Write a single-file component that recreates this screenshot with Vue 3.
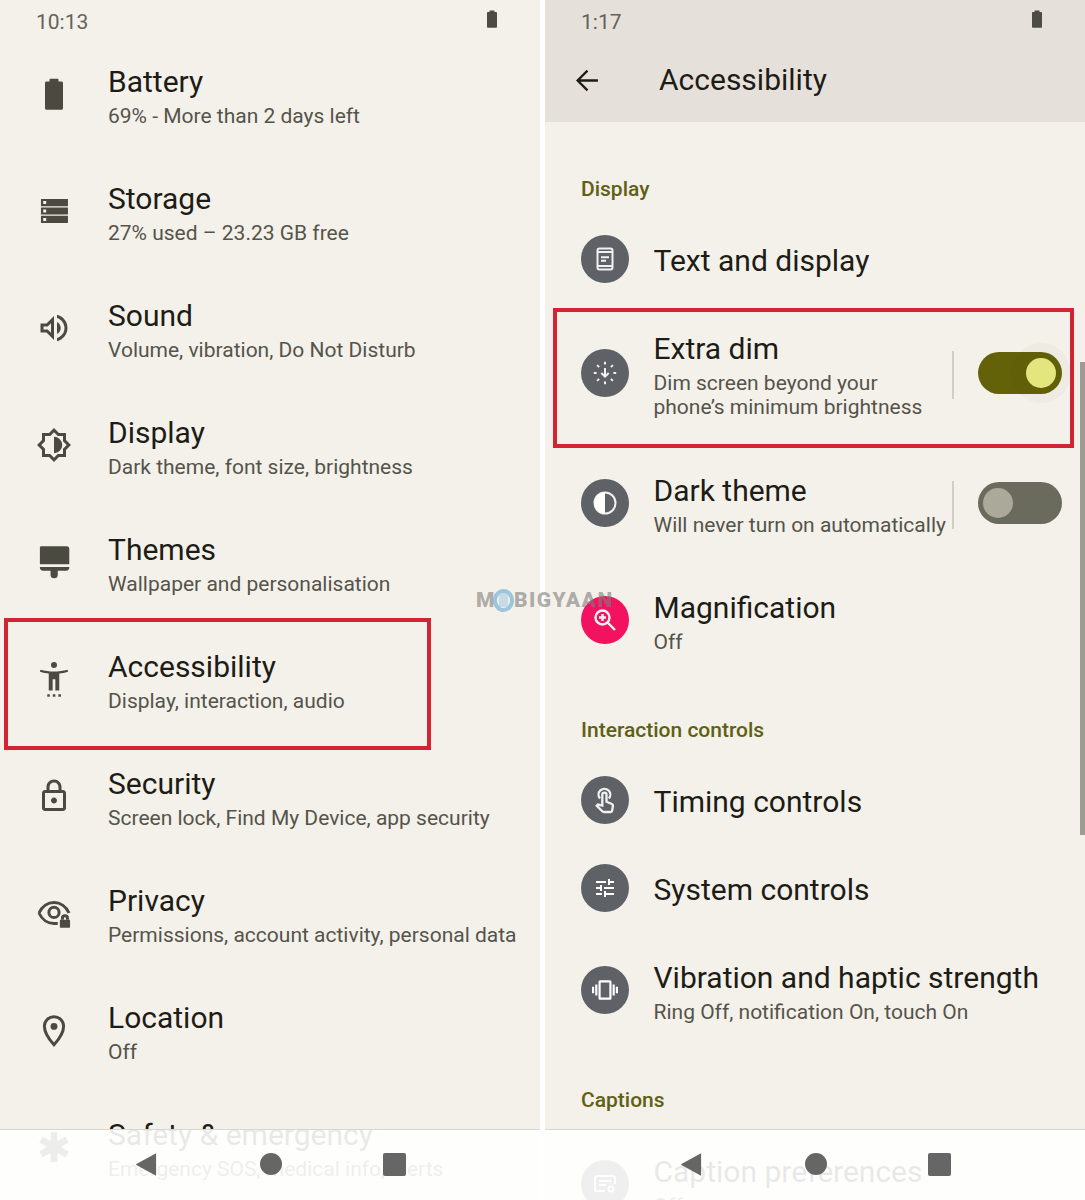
<script setup>
// icons are 24x24; f = filled path, s = stroked path
const icons = {
  battery: { f: "M9 3.600V2.400c0-.4.2-.6.6-.6h4.800c.4 0 .6.2.6.6v1.200h2c.6 0 1 .4 1 1v16.900c0 .6-.4 1-1 1H7c-.6 0-1-.4-1-1V4.600c0-.6.4-1 1-1z" },
  storage: { f: "M3.300 4h18v4.800h-18zM4.800 5.400v2h2v-2zM3.300 9.600h18v4.800h-18zM4.800 11v2h2v-2zM3.300 15.200h18V20h-18zM4.800 16.600v2h2v-2z", odd: true },
  sound: { f: "M3 9v6h4l5 5V4L7 9H3zm7-.17v6.340L7.830 13H5v-2h2.830L10 8.830zM14 7.970v8.050c1.480-.73 2.500-2.250 2.500-4.020 0-1.770-1.020-3.290-2.500-4.030zM14 3.230v2.060c2.890.86 5 3.540 5 6.710s-2.110 5.850-5 6.710v2.060c4.010-.91 7-4.490 7-8.770 0-4.280-2.990-7.860-7-8.770z" },
  display: { f: "M20 15.310L23.310 12 20 8.690V4h-4.690L12 .69 8.690 4H4v4.690L.69 12 4 15.310V20h4.690L12 23.310 15.310 20H20v-4.690zM18 14.480V18h-3.520L12 20.480 9.520 18H6v-3.520L3.520 12 6 9.520V6h3.520L12 3.520 14.480 6H18v3.520L20.480 12 18 14.480zM12 6.500v11a5.500 5.500 0 0 0 0-11z" },
  themes: { f: "M3.500 1.500h17c1 0 1.700.7 1.700 1.700v10.300H2.600V3.200c0-1 -.1-1.700.9-1.700zM2.600 15.300h19.600v.5c0 1.100-.9 2-2 2h-5.700v2.700a2.400 2.400 0 0 1-4.800 0v-2.700H4.600c-1.100 0-2-.9-2-2z" },
  access: {
    f: "M12 .6a2 2 0 1 1 0 4 2 2 0 0 1 0-4zM3 5.800c3 .8 6 1.200 9 1.200s6-.4 9-1.200l.4 1.300c-2 .7-4 1.100-5.900 1.300v11.200h-2.600v-7.500h-1.800v7.500H8.500V8.400C6.600 8.200 4.600 7.800 2.600 7.100zM7.500 22.100h1.700v1.700H7.500zM11.200 22.100h1.700v1.700h-1.700zM14.900 22.100h1.700v1.700h-1.700z"
  },
  lock: { f: "M18 8h-1V6c0-2.760-2.240-5-5-5S7 3.240 7 6v2H6c-1.100 0-2 .9-2 2v10c0 1.100.9 2 2 2h12c1.100 0 2-.9 2-2V10c0-1.100-.9-2-2-2zM9 6c0-1.660 1.340-3 3-3s3 1.340 3 3v2H9V6zm9 14H6V10h12v10zm-6-3c1.100 0 2-.9 2-2s-.9-2-2-2-2 .9-2 2 .9 2 2 2z" },
  privacy: {
    s: "M2 12C4 7.500 8 5 12 5s8 2.500 10 7M2 12c2 4.500 6 7 10 7h2.500M12 8.200a3.400 3.400 0 1 1 0 6.800 3.400 3.400 0 0 1 0-6.800zM17.600 16.500v-1a1.700 1.700 0 0 1 3.400 0v1",
    f: "M16.600 16.500h5.400c.4 0 .7.3.7.7v4c0 .4-.3.7-.7.7h-5.400c-.4 0-.7-.3-.7-.7v-4c0-.4.3-.7.7-.7z"
  },
  location: {
    s: "M12 21.800C8 17.500 5.600 13.700 5.600 9.500a6.400 6.400 0 0 1 12.800 0c0 4.200-2.400 8-6.400 12.300z",
    f: "M12 7.300a2.300 2.300 0 1 1 0 4.600 2.300 2.300 0 0 1 0-4.600z"
  },
  safety: { s: "M12 2v20M3.300 7l17.400 10M3.300 17L20.700 7", wide: true },
  phone: { s: "M6.500 1.500h11c1.100 0 2 .9 2 2v17c0 1.100-.9 2-2 2h-11c-1.100 0-2-.9-2-2v-17c0-1.100.9-2 2-2zM5 5h14M5 19h14M8 10.300h8M8 13.700h5" },
  dim: {
    s: "M12 .8v2.800M12 20.400v2.800M.8 12h2.800M20.400 12h2.800M4.100 4.100l2 2M17.900 6.100l2-2M4.100 19.900l2-2M17.900 17.900l2 2M12 7v8.500M8.300 12l3.700 3.700 3.700-3.700"
  },
  contrast: { s: "M12 1.500a10.500 10.500 0 1 1 0 21 10.500 10.500 0 0 1 0-21z", f: "M12 1.500a10.500 10.500 0 0 0 0 21z" },
  zoom: { s: "M9.500 2.500a7 7 0 1 1 0 14 7 7 0 0 1 0-14zM14.700 14.700L22 22M9.500 6v7M6 9.500h7" },
  touch: { s: "M7.700 10.700a5 5 0 1 1 7.600 0M9.700 7.500a1.800 1.800 0 0 1 3.600 0v6l4.600 1.900c.6.3 1 .9.900 1.600l-.7 4.300c-.1.6-.6 1-1.200 1h-6c-.4 0-.7-.1-1-.4l-5-5 1-1 3.800.8z" },
  tune: { f: "M3 17v2h6v-2H3zM3 5v2h10V5H3zm10 16v-2h8v-2h-8v-2h-2v6h2zM7 9v2H3v2h4v2h2V9H7zm14 4v-2H11v2h10zm-6-4h2V7h4V5h-4V3h-2v6z" },
  vibrate: { f: "M0 15h2V9H0v6zm3 2h2V7H3v10zm19-8v6h2V9h-2zm-3 8h2V7h-2v10zM16.500 3h-9C6.670 3 6 3.670 6 4.500v15c0 .83.67 1.500 1.500 1.500h9c.83 0 1.500-.67 1.500-1.500v-15c0-.83-.67-1.500-1.500-1.500zM16 19H8V5h8v14z" },
  caption: { s: "M12 19H4c-1.100 0-2-.9-2-2V6c0-1.100.9-2 2-2h16c1.100 0 2 .9 2 2v6M6 9h12M6 13h7M18 14.500a2.500 2.500 0 1 1 0 5 2.500 2.500 0 0 1 0-5z" }
};

const settings = [
  { icon: "battery", title: "Battery", sub: "69% - More than 2 days left" },
  { icon: "storage", title: "Storage", sub: "27% used – 23.23 GB free" },
  { icon: "sound", title: "Sound", sub: "Volume, vibration, Do Not Disturb" },
  { icon: "display", title: "Display", sub: "Dark theme, font size, brightness" },
  { icon: "themes", title: "Themes", sub: "Wallpaper and personalisation" },
  { icon: "access", title: "Accessibility", sub: "Display, interaction, audio" },
  { icon: "lock", title: "Security", sub: "Screen lock, Find My Device, app security" },
  { icon: "privacy", title: "Privacy", sub: "Permissions, account activity, personal data" },
  { icon: "location", title: "Location", sub: "Off" },
  { icon: "safety", title: "Safety & emergency", sub: "Emergency SOS, medical info, alerts" }
];

const sections = [
  {
    label: "Display",
    first: true,
    rows: [
      { icon: "phone", title: "Text and display", h: 88 },
      { icon: "dim", title: "Extra dim", sub: "Dim screen beyond your phone’s minimum brightness", h: 144, toggle: "on" },
      { icon: "contrast", title: "Dark theme", sub: "Will never turn on automatically", h: 116, toggle: "off" },
      { icon: "zoom", title: "Magnification", sub: "Off", h: 118, pink: true }
    ]
  },
  {
    label: "Interaction controls",
    second: true,
    rows: [
      { icon: "touch", title: "Timing controls", h: 88 },
      { icon: "tune", title: "System controls", h: 88 },
      { icon: "vibrate", title: "Vibration and haptic strength", sub: "Ring Off, notification On, touch On", h: 120 }
    ]
  },
  {
    label: "Captions",
    rows: [{ icon: "caption", title: "Caption preferences", sub: "Off", h: 120 }]
  }
];
</script>

<template>
  <div class="page">
    <section class="panel">
      <div class="status">
        <span class="time">10:13</span>
        <svg class="batt" viewBox="0 0 24 24"><path :d="icons.battery.f" /></svg>
      </div>
      <div v-for="item in settings" :key="item.title" class="setting">
        <svg class="icon" viewBox="0 0 24 24">
          <path v-if="icons[item.icon].s" class="line" :class="{ wide: icons[item.icon].wide }" :d="icons[item.icon].s" />
          <path v-if="icons[item.icon].f" :fill-rule="icons[item.icon].odd ? 'evenodd' : 'nonzero'" :d="icons[item.icon].f" />
        </svg>
        <div class="text">
          <div class="title">{{ item.title }}</div>
          <div class="sub">{{ item.sub }}</div>
        </div>
      </div>
      <div class="nav">
        <svg class="back" viewBox="0 0 22 26"><path d="M21 1.500c.3-.2.500 0 .5.300v22.400c0 .3-.2.500-.5.300L1 13.500c-.4-.2-.4-.8 0-1z" /></svg>
        <span class="home"></span>
        <span class="recent"></span>
      </div>
    </section>

    <section class="panel">
      <header class="appbar">
        <div class="status">
          <span class="time">1:17</span>
          <svg class="batt" viewBox="0 0 24 24"><path :d="icons.battery.f" /></svg>
        </div>
        <div class="toolbar">
          <svg class="arrow" viewBox="0 0 24 24"><path d="M22 12H2.500M12 2.500L2.500 12l9.500 9.500" /></svg>
          <span class="title">Accessibility</span>
        </div>
      </header>

      <template v-for="sec in sections" :key="sec.label">
        <div class="label" :class="{ first: sec.first, second: sec.second }">{{ sec.label }}</div>
        <div v-for="row in sec.rows" :key="row.title" class="row" :style="{ height: row.h + 'px' }">
          <div class="badge" :class="{ pink: row.pink, raised: row.sub }">
            <svg class="glyph" :class="row.icon" viewBox="0 0 24 24">
              <path v-if="icons[row.icon].s" class="line" :d="icons[row.icon].s" />
              <path v-if="icons[row.icon].f" :d="icons[row.icon].f" />
            </svg>
          </div>
          <div class="text" :class="{ single: !row.sub }">
            <div class="title">{{ row.title }}</div>
            <div v-if="row.sub" class="sub">{{ row.sub }}</div>
          </div>
          <template v-if="row.toggle">
            <span class="divider"></span>
            <span class="switch" :class="row.toggle"><span class="thumb"></span></span>
          </template>
        </div>
      </template>

      <span class="scrollbar"></span>
      <div class="nav">
        <svg class="back" viewBox="0 0 22 26"><path d="M21 1.500c.3-.2.500 0 .5.300v22.400c0 .3-.2.500-.5.300L1 13.500c-.4-.2-.4-.8 0-1z" /></svg>
        <span class="home"></span>
        <span class="recent"></span>
      </div>
    </section>

    <span class="callout callout-left"></span>
    <span class="callout callout-right"></span>

    <div class="watermark">M<span class="ring"><span class="ring-o"></span></span>BIGYAAN</div>
  </div>
</template>

<style scoped>
.page {
  position: relative;
  width: 1085px;
  height: 1200px;
  display: flex;
  gap: 5px;
  overflow: hidden;
  background: #fff;
  font-family: Roboto, "Liberation Sans", sans-serif;
}
.panel {
  position: relative;
  width: 540px;
  height: 1200px;
  overflow: hidden;
  flex: none;
  background: #f4f1ea;
}
.status {
  height: 37px;
  display: flex;
  align-items: center;
  justify-content: space-between;
  padding: 6px 36px 0;
  box-sizing: border-box;
}
.time {
  font-size: 21px;
  color: #63625a;
}
.batt {
  width: 20px;
  height: 20px;
  fill: #4d4c43;
  margin-right: 2px;
  margin-top: -6px;
}
.setting {
  height: 117px;
  display: flex;
  align-items: center;
  padding-left: 36px;
  gap: 36px;
}
.icon {
  width: 36px;
  height: 36px;
  flex: none;
  fill: #4b4a40;
  margin-bottom: 4px;
}
.line {
  fill: none;
  stroke: currentColor;
  stroke-width: 2;
}
.icon .line {
  color: #4b4a40;
}
.icon .wide {
  stroke-width: 4.500;
}
.title {
  font-size: 30px;
  line-height: 36px;
  color: #1d1c16;
  white-space: nowrap;
}
.sub {
  font-size: 21px;
  line-height: 24px;
  margin-top: 4px;
  color: #55544a;
}
.appbar {
  height: 122px;
  background: #e5e1da;
}
.toolbar {
  height: 85px;
  display: flex;
  align-items: center;
  padding: 1px 0 0 30px;
  box-sizing: border-box;
  gap: 59px;
}
.arrow {
  width: 25px;
  height: 25px;
  fill: none;
  stroke: #1d1c16;
  stroke-width: 2.200;
}
.label {
  padding: 36px 36px 14px;
  font-size: 21px;
  line-height: 24px;
  font-weight: 500;
  color: #5f6014;
}
.label.first {
  padding-top: 55px;
}
.label.second {
  padding-top: 37px;
}
.row {
  display: flex;
  align-items: center;
  padding: 0 23px 0 36px;
  box-sizing: border-box;
}
.badge {
  width: 48px;
  height: 48px;
  flex: none;
  margin-right: 24.500px;
  border-radius: 50%;
  background: #5e6166;
  display: flex;
  align-items: center;
  justify-content: center;
}
.badge.raised {
  margin-bottom: 4px;
}
.badge.pink {
  background: #f3125f;
}
.glyph {
  width: 24px;
  height: 24px;
  fill: #fff;
  color: #f1f1f1;
}
.glyph.vibrate {
  width: 26px;
  height: 26px;
}
.glyph.touch {
  width: 28px;
  height: 28px;
}
.glyph.zoom .line {
  stroke-width: 2.400;
}
.row .text {
  flex: 1;
  min-width: 0;
}
.row .text.single {
  padding-top: 3px;
}
.divider {
  width: 2px;
  height: 48px;
  flex: none;
  margin-right: 24px;
  background: #d1cfc5;
}
.switch {
  position: relative;
  width: 84px;
  height: 42px;
  flex: none;
  margin-bottom: 4px;
  border-radius: 21px;
}
.switch.on {
  background: #636209;
}
.switch.off {
  background: #6b6b5d;
}
.thumb {
  position: absolute;
  top: 6px;
  width: 30px;
  height: 30px;
  border-radius: 50%;
}
.on .thumb {
  right: 6px;
  background: #e3e57f;
  box-shadow: 0 0 0 15px rgba(60, 60, 40, 0.03);
}
.off .thumb {
  left: 5px;
  background: #aaa99a;
}
.scrollbar {
  position: absolute;
  top: 362px;
  right: 0;
  width: 5px;
  height: 473px;
  background: #9c9c92;
}
.nav {
  position: absolute;
  left: 0;
  right: 0;
  bottom: 0;
  height: 71px;
  box-sizing: border-box;
  padding-bottom: 2px;
  display: flex;
  align-items: center;
  justify-content: center;
  gap: 101px;
  background: rgba(255, 255, 255, 0.9);
  border-top: 1px solid #d8d8d2;
}
.back {
  width: 22px;
  height: 25px;
  margin-right: 2px;
  fill: #666;
}
.home {
  width: 22px;
  height: 22px;
  border-radius: 50%;
  background: #666;
}
.recent {
  width: 23px;
  height: 23px;
  border-radius: 2px;
  background: #666;
}
.callout {
  position: absolute;
  border: 4px solid #d32433;
  box-sizing: border-box;
}
.callout-left {
  left: 4px;
  top: 618px;
  width: 427px;
  height: 132px;
}
.callout-right {
  left: 553px;
  top: 308px;
  width: 521px;
  height: 140px;
}
.watermark {
  position: absolute;
  left: 476px;
  top: 588px;
  display: flex;
  align-items: center;
  font-size: 21px;
  line-height: 24px;
  font-weight: 900;
  color: rgba(125, 125, 125, 0.6);
  letter-spacing: 1.500px;
}
.ring {
  width: 21px;
  height: 23px;
  margin-left: -3px;
  border: 4px solid rgba(120, 180, 215, 0.7);
  border-radius: 50%;
  box-sizing: border-box;
  display: flex;
  align-items: center;
  justify-content: center;
}
.ring-o {
  width: 9px;
  height: 14px;
  background: rgba(170, 205, 225, 0.6);
}
</style>
